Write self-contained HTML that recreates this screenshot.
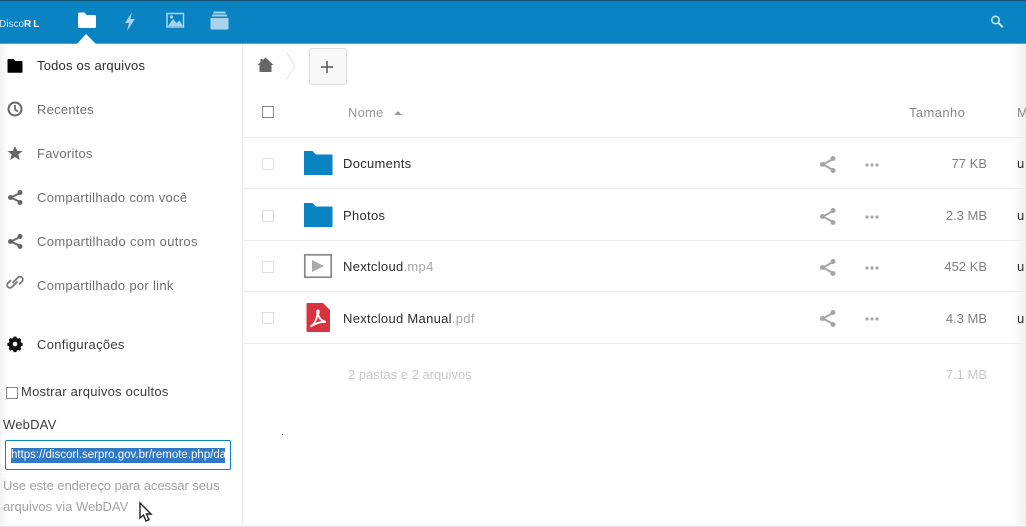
<!DOCTYPE html>
<html><head><meta charset="utf-8">
<style>
html,body{margin:0;padding:0;width:1026px;height:527px;overflow:hidden;background:#fff;font-family:"Liberation Sans",sans-serif;font-size:13px}
#w{position:absolute;left:0;top:0;width:1026px;height:527px;overflow:hidden;filter:blur(.35px)}
.t{position:absolute;white-space:nowrap;line-height:16px;letter-spacing:.3px}
.a{position:absolute}
.n{color:#6f6f6f}
.d{color:#2c2c2c}
.line{position:absolute;left:243px;width:783px;height:1px;background:#ebebeb}
.cb{position:absolute;left:262px;width:10px;height:10px;border:1px solid #ddd;border-radius:1px}
.r{text-align:right;right:39px;color:#808080;letter-spacing:0}
svg{position:absolute;overflow:visible}
</style></head><body><div id="w">
<!-- header -->
<div class="a" style="left:0;top:0;width:1026px;height:43px;background:#0a83c3"></div>
<div class="a" style="left:0;top:0;width:1026px;height:1px;background:#11506f"></div>
<div class="a" style="left:0;top:43px;width:1026px;height:1px;background:#45a5d6"></div>
<div class="t" style="left:-1px;top:17px;font-size:10px;color:#cfe6f3;letter-spacing:0">Disco<b style="color:#fff;letter-spacing:2px">RL</b></div>
<svg style="left:0;top:0" width="240" height="44">
<path fill="#fff" d="M78 14q0-1.500 1.500-1.500h5l2 2.500h8q1.500 0 1.500 1.500v10q0 1.500-1.500 1.500h-15q-1.500 0-1.500-1.500z"/>
<path fill="#fff" d="M77 44l9-10 10 10z"/>
<path fill="#a9d3ea" d="M132 12l-7 11h4l-2 8 8-12h-4.500z"/>
<path fill="none" stroke="#a9d3ea" stroke-width="1.500" d="M167 13.500h16.500v13.500h-16.500z"/>
<path fill="#a9d3ea" d="M168 26l5-7 3.500 4 3-2.500 3.500 5.500z"/><circle cx="171.500" cy="17" r="1.600" fill="#a9d3ea"/>
<path fill="#a9d3ea" d="M214 11.500h11l1 2h-13zM212.500 14.500h14l1 2h-16zM210.500 18h18v10q0 1.500-1.500 1.500h-15q-1.500 0-1.500-1.500z"/>
</svg>
<svg style="left:990px;top:14px" width="16" height="16"><circle cx="5.500" cy="6" r="3.700" fill="none" stroke="#cfe6f3" stroke-width="1.500"/><path d="M8.500 9l4.300 4.300" stroke="#cfe6f3" stroke-width="2"/></svg>

<!-- sidebar -->
<div class="a" style="left:242px;top:44px;width:1px;height:482px;background:#eee"></div>
<div class="a" style="left:0;top:44px;width:8px;height:482px;background:linear-gradient(90deg,#f1f1f1,#fff)"></div>
<div class="a" style="left:1013px;top:44px;width:13px;height:482px;background:linear-gradient(90deg,#fff,#f0f0f0)"></div>
<div class="a" style="left:0;top:526px;width:1026px;height:1px;background:#ddd"></div>
<svg style="left:0;top:44px" width="30" height="320">
<path fill="#000" d="M7.500 16q0-1 1-1h5l2 2h6q1 0 1 1v10q0 .800-1 .800h-13q-1 0-1-.800z"/>
<circle cx="15" cy="65" r="6.500" fill="none" stroke="#666" stroke-width="2"/><path d="M15 61v4.500l3 2" fill="none" stroke="#666" stroke-width="1.700"/>
<path fill="#666" d="M15 102l2.200 5h5.300l-4.200 3.600 1.500 5.400-4.800-3-4.800 3 1.500-5.400-4.200-3.600h5.300z"/>
<g id="s"><path d="M20 149l-9 4.500 9 4.500" fill="none" stroke="#666" stroke-width="2"/><circle cx="20" cy="148.500" r="2.500" fill="#666"/><circle cx="10.500" cy="153.500" r="2.500" fill="#666"/><circle cx="20" cy="158.500" r="2.500" fill="#666"/></g>
<g transform="translate(0,44)"><path d="M20 149l-9 4.500 9 4.500" fill="none" stroke="#666" stroke-width="2"/><circle cx="20" cy="148.500" r="2.500" fill="#666"/><circle cx="10.500" cy="153.500" r="2.500" fill="#666"/><circle cx="20" cy="158.500" r="2.500" fill="#666"/></g>
<path d="M12.500 238l5.500-5.500a2.800 2.800 0 0 1 4 4l-3 3M17.500 236.500l-5.500 5.500a2.800 2.800 0 0 1-4-4l3-3" fill="none" stroke="#777" stroke-width="1.800" transform="translate(0,1)"/>
<path fill="#111" d="M13 292.500h4l.5 2 2 .8 1.800-1 2.500 2.700-1 1.800.8 2 2 .5v3.800l-2 .5-.8 2 1 1.800-2.500 2.700-1.800-1-2 .8-.5 2h-4l-.5-2-2-.8-1.800 1-2.500-2.700 1-1.800-.8-2-2-.5v-3.800l2-.5.8-2-1-1.800 2.500-2.700 1.800 1 2-.8zM15 299.500a3.200 3.200 0 1 0 0 6.400 3.200 3.200 0 0 0 0-6.400z" transform="translate(15 300) scale(.72) translate(-15 -302.700)"/>
</svg>
<div class="t d" style="left:37px;top:58px;letter-spacing:.2px">Todos os arquivos</div>
<div class="t n" style="left:37px;top:102px;letter-spacing:.25px">Recentes</div>
<div class="t n" style="left:37px;top:146px;letter-spacing:.25px">Favoritos</div>
<div class="t n" style="left:37px;top:190px">Compartilhado com você</div>
<div class="t n" style="left:37px;top:234px;letter-spacing:.35px">Compartilhado com outros</div>
<div class="t n" style="left:37px;top:278px">Compartilhado por link</div>
<div class="t" style="left:37px;top:337px;color:#3c3c3c">Configurações</div>
<div class="a" style="left:6px;top:387px;width:10px;height:10px;border:1px solid #888;border-radius:1px"></div>
<div class="t" style="left:21px;top:384px;color:#3c3c3c;letter-spacing:.25px">Mostrar arquivos ocultos</div>
<div class="t" style="left:3px;top:417px;color:#3c3c3c;letter-spacing:.2px">WebDAV</div>
<div class="a" style="left:1px;top:435px;width:231px;height:38px;background:#fff"></div>
<div class="a" style="left:5px;top:440px;width:224px;height:28px;border:1px solid #0a83c3;border-radius:2px;background:#fff"></div>
<div class="a" style="left:11px;top:448px;width:214px;height:15px;background:#3079c5;overflow:hidden;color:#fff;font-size:11.500px;line-height:15px;white-space:nowrap;letter-spacing:0">https://discorl.serpro.gov.br/remote.php/dav/files</div>
<div class="t" style="left:3px;top:478px;color:#a2a2a2;letter-spacing:-.07px">Use este endereço para acessar seus</div>
<div class="t" style="left:3px;top:499px;color:#a2a2a2;letter-spacing:0">arquivos via WebDAV</div>
<svg style="left:139px;top:502px" width="14" height="20"><path d="M1 1v15l3.500-3 2.500 6 3-1.300-2.500-5.700h4.500z" fill="#fff" stroke="#222" stroke-width="1.400"/></svg>
<div class="a" style="left:282px;top:434px;width:1px;height:1px;background:#000"></div>

<!-- breadcrumb -->
<svg style="left:243px;top:44px" width="110" height="50">
<path fill="#666" d="M22.500 13.500l8 7.500h-2v7h-12v-7h-2l3-2.800v-3.200h2v1.400z"/>
<path d="M44 9l8 13-8 13" fill="none" stroke="#e4e4e4" stroke-width="1"/>
</svg>
<div class="a" style="left:309px;top:48px;width:36px;height:35px;border:1px solid #ddd;border-radius:3px;background:#f8f8f8"></div>
<svg style="left:320px;top:60px" width="14" height="14"><path d="M7 1v12M1 7h12" stroke="#555" stroke-width="1.500"/></svg>

<!-- table -->
<div class="a" style="left:262px;top:106px;width:10px;height:10px;border:1px solid #888;border-radius:1px"></div>
<div class="t" style="left:348px;top:105px;color:#999;letter-spacing:.2px">Nome</div>
<svg style="left:393px;top:110px" width="10" height="6"><path d="M1 5l4-4 4 4z" fill="#999"/></svg>
<div class="t" style="left:909px;top:105px;color:#888;letter-spacing:.4px">Tamanho</div>
<div class="t" style="left:1017px;top:105px;color:#888">M</div>

<div class="line" style="top:137px"></div>
<div class="line" style="top:188px"></div>
<div class="line" style="top:240px"></div>
<div class="line" style="top:291px"></div>
<div class="line" style="top:343px"></div>

<div class="cb" style="top:158px"></div>
<div class="cb" style="top:210px"></div>
<div class="cb" style="top:261px"></div>
<div class="cb" style="top:312px"></div>

<svg style="left:300px;top:145px" width="40" height="195">
<path fill="#0a83c3" d="M4 6.500q0-.500.500-.500h8l3.500 3.500h16q.500 0 .500.500v19.500q0 .500-.500.500h-27.500q-.500 0-.500-.500z"/>
<path fill="#0a83c3" d="M4 58.500q0-.500.500-.500h8l3.500 3.500h16q.500 0 .500.500v19.500q0 .500-.500.500h-27.500q-.500 0-.500-.500z"/>
<rect x="4.800" y="109.800" width="26.400" height="22.400" fill="#fff" stroke="#888" stroke-width="1.700"/>
<path fill="#aaa" d="M12 115v12l12-6z"/>
<path fill="#d8333f" d="M6.500 159q0-1 1-1h15.500l7 7v21q0 1-1 1h-21.500q-1 0-1-1z"/>
<path fill="none" stroke="#fff" stroke-width="1.900" d="M10.500 181.500c4-2 6-7 7-12-.500-2.500-.500-4 .5-4s1 2 0 4c2 5 4 6.500 8 7.500M25.500 177c-5-.500-10 1.500-15 4.500"/>
</svg>

<div class="t d" style="left:343px;top:156px">Documents</div>
<div class="t d" style="left:343px;top:208px">Photos</div>
<div class="t d" style="left:343px;top:259px">Nextcloud<span style="color:#a5a5a5">.mp4</span></div>
<div class="t d" style="left:343px;top:311px">Nextcloud Manual<span style="color:#a5a5a5">.pdf</span></div>
<div class="t" style="left:348px;top:367px;color:#c8c8c8;letter-spacing:0">2 pastas e 2 arquivos</div>

<svg style="left:815px;top:150px" width="70" height="180">
<g id="act" fill="#a5a5a5"><path d="M18 9l-10 5.500 10 5.500" fill="none" stroke="#a5a5a5" stroke-width="2"/><circle cx="18" cy="8.500" r="2.500"/><circle cx="7.500" cy="14.500" r="2.500"/><circle cx="18" cy="20.500" r="2.500"/><circle cx="52" cy="15" r="1.600"/><circle cx="57" cy="15" r="1.600"/><circle cx="62" cy="15" r="1.600"/></g>
<use href="#act" y="52"/><use href="#act" y="103"/><use href="#act" y="154"/>
</svg>

<div class="t r" style="top:156px">77 KB</div>
<div class="t r" style="top:208px">2.3 MB</div>
<div class="t r" style="top:259px">452 KB</div>
<div class="t r" style="top:311px">4.3 MB</div>
<div class="t r" style="top:367px;color:#c8c8c8">7.1 MB</div>
<div class="t d" style="left:1017px;top:156px">u</div>
<div class="t d" style="left:1017px;top:208px">u</div>
<div class="t d" style="left:1017px;top:259px">u</div>
<div class="t d" style="left:1017px;top:311px">u</div>
</div></body></html>
